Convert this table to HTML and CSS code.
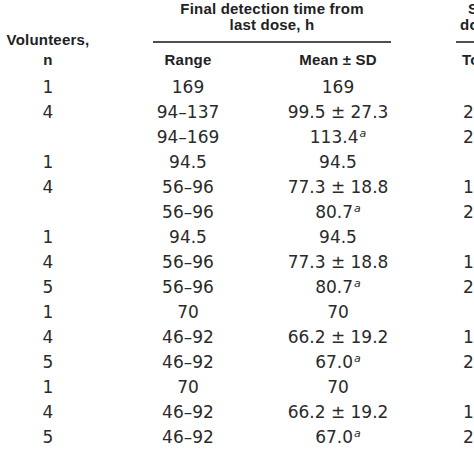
FILE: index.html
```html
<!DOCTYPE html>
<html>
<head>
<meta charset="utf-8">
<link rel="stylesheet" href="styles.css">
</head>
<body>
<table class="data">
  <colgroup>
    <col class="c1"><col class="c2"><col class="c3"><col class="c4">
  </colgroup>
  <thead>
    <tr>
      <th rowspan="2" class="vol">Volunteers,<br>n</th>
      <th colspan="2" class="grp"><div class="grp-in">Final detection time from<br>last dose, h</div></th>
      <th class="grp4"><div class="grp4-in"><span class="l1">Samples after</span><span class="l2">doses, n</span></div></th>
    </tr>
    <tr class="sub">
      <th class="range">Range</th>
      <th class="mean">Mean ± SD</th>
      <th class="tot">Total</th>
    </tr>
  </thead>
  <tbody>
    <tr><td class="n">1</td><td class="range">169</td><td class="mean">169</td><td class="tot"></td></tr>
    <tr><td class="n">4</td><td class="range">94–137</td><td class="mean">99.5 ± 27.3</td><td class="tot">2</td></tr>
    <tr><td class="n"></td><td class="range">94–169</td><td class="mean">113.4<sup>a</sup></td><td class="tot">2</td></tr>
    <tr><td class="n">1</td><td class="range">94.5</td><td class="mean">94.5</td><td class="tot"></td></tr>
    <tr><td class="n">4</td><td class="range">56–96</td><td class="mean">77.3 ± 18.8</td><td class="tot">1</td></tr>
    <tr><td class="n"></td><td class="range">56–96</td><td class="mean">80.7<sup>a</sup></td><td class="tot">2</td></tr>
    <tr><td class="n">1</td><td class="range">94.5</td><td class="mean">94.5</td><td class="tot"></td></tr>
    <tr><td class="n">4</td><td class="range">56–96</td><td class="mean">77.3 ± 18.8</td><td class="tot">1</td></tr>
    <tr><td class="n">5</td><td class="range">56–96</td><td class="mean">80.7<sup>a</sup></td><td class="tot">2</td></tr>
    <tr><td class="n">1</td><td class="range">70</td><td class="mean">70</td><td class="tot"></td></tr>
    <tr><td class="n">4</td><td class="range">46–92</td><td class="mean">66.2 ± 19.2</td><td class="tot">1</td></tr>
    <tr><td class="n">5</td><td class="range">46–92</td><td class="mean">67.0<sup>a</sup></td><td class="tot">2</td></tr>
    <tr><td class="n">1</td><td class="range">70</td><td class="mean">70</td><td class="tot"></td></tr>
    <tr><td class="n">4</td><td class="range">46–92</td><td class="mean">66.2 ± 19.2</td><td class="tot">1</td></tr>
    <tr><td class="n">5</td><td class="range">46–92</td><td class="mean">67.0<sup>a</sup></td><td class="tot">2</td></tr>
  </tbody>
</table>
</body>
</html>
```

FILE: styles.css
```css
html, body {
  margin: 0;
  padding: 0;
  background: #ffffff;
  overflow: hidden;
  width: 474px;
  height: 474px;
}

.data {
  border-collapse: collapse;
  border-spacing: 0;
  table-layout: fixed;
  width: 591px;
  color: #2a2a2a;
  font-family: "DejaVu Sans", sans-serif;
  font-size: 17px;
}

.c1 { width: 96px; }
.c2 { width: 127px; }
.c3 { width: 168px; }
.c4 { width: 200px; }

.data th,
.data td {
  padding: 0;
  white-space: nowrap;
}

.data th {
  font-family: "Liberation Sans", Arial, sans-serif;
  font-weight: bold;
  font-size: 15px;
  line-height: 17px;
  letter-spacing: 0.2px;
  color: #222222;
}

.vol {
  text-align: center;
  vertical-align: bottom;
  line-height: 20px !important;
  padding-bottom: 5px !important;
}

.grp {
  vertical-align: top;
}

.grp-in {
  margin-left: 57px;
  text-align: center;
  line-height: 16px;
  padding-top: 1px;
  padding-bottom: 8px;
  border-bottom: 2px solid #505050;
}

.grp4 {
  vertical-align: top;
  text-align: left;
}

.grp4-in {
  margin-left: 65px;
  line-height: 16px;
  padding-top: 1px;
  padding-bottom: 8px;
  border-bottom: 2px solid #505050;
}

.grp4-in .l1 {
  display: block;
  padding-left: 12px;
}

.grp4-in .l2 {
  display: block;
  padding-left: 4px;
}

.sub th {
  padding-top: 8px;
  padding-bottom: 7px;
}

.data .range {
  text-align: center;
  padding-left: 57px;
}

.data .mean {
  text-align: center;
  padding-left: 62px;
}

.data th.tot {
  text-align: left;
  padding-left: 71px;
}

.data td.tot {
  text-align: left;
  padding-left: 72px;
}

.data td {
  height: 25px;
  line-height: 25px;
  vertical-align: top;
}

.data td.n {
  text-align: center;
}

.data sup {
  font-size: 11px;
  font-style: italic;
  line-height: 0;
  vertical-align: 6px;
  margin-left: 1px;
}
```
